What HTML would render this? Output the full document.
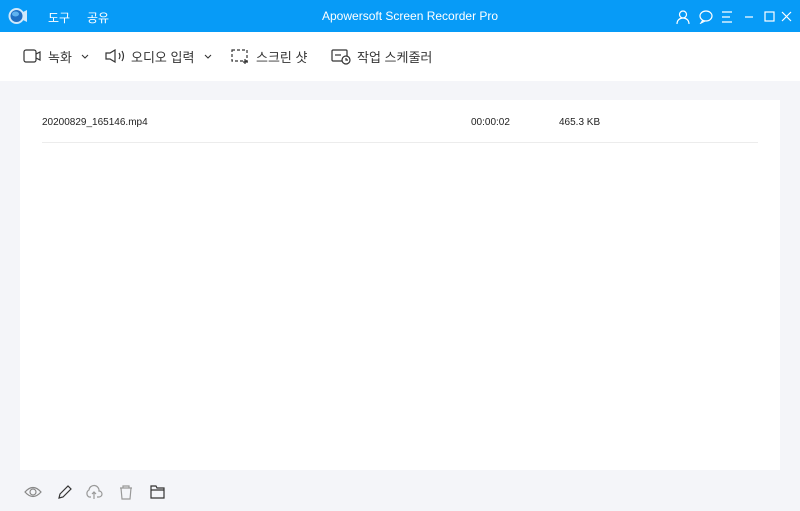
<!DOCTYPE html>
<html><head><meta charset="utf-8"><style>
*{margin:0;padding:0;box-sizing:border-box}
body{width:800px;height:511px;overflow:hidden;background:#f4f5f9;font-family:"Liberation Sans","Noto Sans CJK KR",sans-serif;position:relative}
.tb{position:absolute;left:0;top:0;width:800px;height:32px;background:#079bf7;color:#fff}
.tb span{position:absolute;top:9px;font-size:12px}
.tool{position:absolute;left:0;top:32px;width:800px;height:49px;background:#fff}
.tool .t{position:absolute;top:15px;font-size:13px;color:#333}
.panel{position:absolute;left:20px;top:100px;width:760px;height:370px;background:#fff}
.panel span{position:absolute;top:17px;font-size:10px;color:#222}
.line{position:absolute;left:22px;top:42px;width:716px;height:1px;background:#ececec}
svg{position:absolute}
</style></head><body>
<div class="tb">
<svg style="left:8px;top:7px" width="20" height="18" viewBox="0 0 20 18"><path d="M13 6l6-3v12l-6-3z" fill="#cfe8fb"/><circle cx="8.5" cy="9" r="8" fill="#cfe8fb"/><circle cx="8.5" cy="9" r="6" fill="#1f6fc4"/><ellipse cx="7.5" cy="7" rx="3.5" ry="2.5" fill="#5fb2f0"/></svg>
<span style="left:48px">도구</span><span style="left:87px">공유</span>
<span style="left:322px">Apowersoft Screen Recorder Pro</span>
<svg style="left:676px;top:10px" width="116" height="14" viewBox="0 0 116 14" fill="none" stroke="#fff" stroke-width="1.2">
<circle cx="7" cy="4.5" r="3.5"/><path d="M1 14c0-4 3-6 6-6s6 2 6 6"/>
<ellipse cx="30" cy="6" rx="6" ry="5"/><path d="M27 10l-2 3 4-2"/>
<path d="M46 2h10M46 7h8M46 12h10"/>
<path d="M69 7h8"/><rect x="89" y="2" width="9" height="9"/><path d="M106 2l9 9M115 2l-9 9"/>
</svg>
</div>
<div class="tool">
<svg style="left:23px;top:17px" width="20" height="14" viewBox="0 0 20 14" fill="none" stroke="#333" stroke-width="1.2"><rect x="1" y="1" width="12" height="12" rx="2"/><path d="M13 5l4-2v8l-4-2"/></svg>
<span class="t" style="left:48px">녹화</span>
<svg style="left:81px;top:22px" width="8" height="6" viewBox="0 0 8 6" fill="none" stroke="#333" stroke-width="1.1"><path d="M1 1l3 3 3-3"/></svg>
<svg style="left:105px;top:17px" width="22" height="14" viewBox="0 0 22 14" fill="none" stroke="#333" stroke-width="1.2"><path d="M1 4h4l5-3v12l-5-3H1z"/><path d="M14 4q2 3 0 6M17 2q3 5 0 10"/></svg>
<span class="t" style="left:131px">오디오 입력</span>
<svg style="left:204px;top:22px" width="8" height="6" viewBox="0 0 8 6" fill="none" stroke="#333" stroke-width="1.1"><path d="M1 1l3 3 3-3"/></svg>
<svg style="left:231px;top:17px" width="18" height="15" viewBox="0 0 18 15" fill="none" stroke="#333" stroke-width="1.2" stroke-dasharray="3 2"><rect x="1" y="1" width="15" height="11"/><path d="M14 10v5M12 13h5" stroke-dasharray="none"/></svg>
<span class="t" style="left:256px">스크린 샷</span>
<svg style="left:331px;top:17px" width="20" height="16" viewBox="0 0 20 16" fill="none" stroke="#333" stroke-width="1.2"><rect x="1" y="1" width="15" height="11" rx="1"/><path d="M4 6h6"/><circle cx="15" cy="11" r="4" fill="#fff"/><path d="M15 9v2h2"/></svg>
<span class="t" style="left:357px">작업 스케줄러</span>
</div>
<div class="panel">
<span style="left:22px">20200829_165146.mp4</span>
<span style="left:451px">00:00:02</span>
<span style="left:539px">465.3 KB</span>
<div class="line"></div>
</div>
<svg style="left:24px;top:484px" width="150" height="16" viewBox="0 0 150 16" fill="none" stroke-width="1.2">
<path d="M1 8q8-9 16 0q-8 9-16 0z" stroke="#888"/><circle cx="9" cy="8" r="3" stroke="#888"/>
<path d="M35 14l1-4 8-8 3 3-8 8z" stroke="#333"/>
<path d="M67 13h-2a4 4 0 0 1 0-7 5 5 0 0 1 10 1 3 3 0 0 1 0 6h-2M70 8v7M68 10l2-2 2 2" stroke="#999"/>
<path d="M96 4h12M99 4V2h6v2M97 4l1 11h8l1-11" stroke="#999"/>
<path d="M127 2h5l1 2h7v10h-13z M127 6h13" stroke="#333"/>
</svg>
</body></html>
